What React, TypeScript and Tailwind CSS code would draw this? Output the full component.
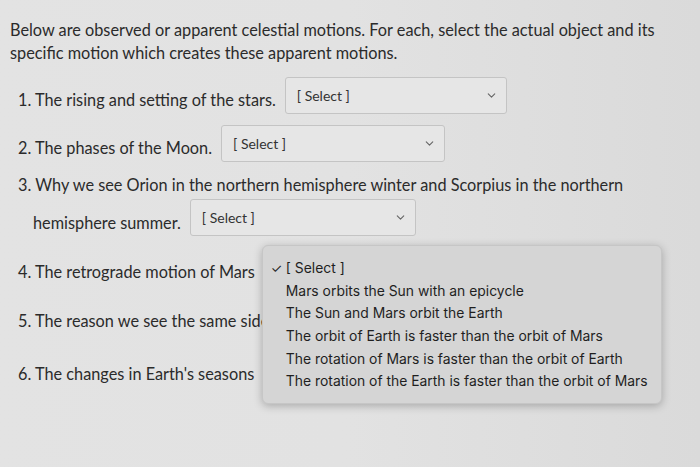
import { ChevronDown } from 'lucide-react'

const options = [
  'Mars orbits the Sun with an epicycle',
  'The Sun and Mars orbit the Earth',
  'The orbit of Earth is faster than the orbit of Mars',
  'The rotation of Mars is faster than the orbit of Earth',
  'The rotation of the Earth is faster than the orbit of Mars',
]

function SelectBox({ width }: { width: string }) {
  return (
    <div
      className={`${width} h-[37px] shrink-0 flex items-center justify-between rounded-[3px] border border-[#c4c4c4] bg-[#e6e6e6] pl-[11px] pr-[8px]`}
    >
      <span className="text-[14px] text-[#333]">[ Select ]</span>
      <ChevronDown className="h-[13px] w-[13px] text-[#666]" strokeWidth={2} />
    </div>
  )
}

export default function App() {
  return (
    <div
      className="w-[700px] h-[467px] overflow-hidden bg-gradient-to-r from-[#e3e3e3] via-[#e2e2e2] to-[#dadada] text-[#2b2b2b] pl-[10px] pt-[18px]"
      style={{ fontFamily: 'Lato, "Open Sans", sans-serif' }}
    >
      <p className="text-[16.3px] leading-[23px] w-[670px]">
        Below are observed or apparent celestial motions. For each, select the actual object and its
        <br />
        specific motion which creates these apparent motions.
      </p>

      <div className="pl-[8px] text-[16.3px]">
        <div className="mt-[13px] flex items-center gap-[9px]">
          <span className="mt-[9px]">1. The rising and setting of the stars.</span>
          <SelectBox width="w-[222px]" />
        </div>

        <div className="mt-[11px] flex items-center gap-[9px]">
          <span className="mt-[9px]">2. The phases of the Moon.</span>
          <SelectBox width="w-[224px]" />
        </div>

        <div className="mt-[12px] leading-[22px]">
          3. Why we see Orion in the northern hemisphere winter and Scorpius in the northern
        </div>
        <div className="mt-[3px] flex items-center gap-[9px] pl-[15px]">
          <span className="mt-[12px]">hemisphere summer.</span>
          <SelectBox width="w-[226px]" />
        </div>

        <div className="mt-[13px] flex items-center gap-[7px]">
          <span className="mt-[9px] whitespace-nowrap">4. The retrograde motion of Mars</span>
          <div className="relative">
            <SelectBox width="w-[222px]" />
            <div
              className="absolute left-0 top-[-4px] z-10 w-[400px] rounded-[6px] border border-[#c6c6c6] bg-[#d5d5d5] pt-[11px] pb-[10px] shadow-[0_2px_8px_rgba(0,0,0,0.25)]"
              style={{ fontFamily: 'Inter, "Noto Sans", sans-serif' }}
            >
              <div className="flex items-center h-[23px] text-[13.9px] text-[#1f1f1f]">
                <span className="w-[23px] pl-[8px] text-[13px]">✓</span>
                <span>[ Select ]</span>
              </div>
              {options.map((o) => (
                <div
                  key={o}
                  className="h-[22.6px] flex items-center pl-[23px] text-[13.9px] text-[#1f1f1f] whitespace-nowrap"
                >
                  {o}
                </div>
              ))}
            </div>
          </div>
        </div>

        <div className="mt-[14px] flex items-center gap-[3px] whitespace-nowrap">
          <span className="mt-[9px]">5. The reason we see the same side of the Moon.</span>
        </div>

        <div className="mt-[18px] flex items-center gap-[3px] h-[37px] whitespace-nowrap">
          <span className="mt-[9px]">6. The changes in Earth's seasons</span>
        </div>
      </div>
    </div>
  )
}
